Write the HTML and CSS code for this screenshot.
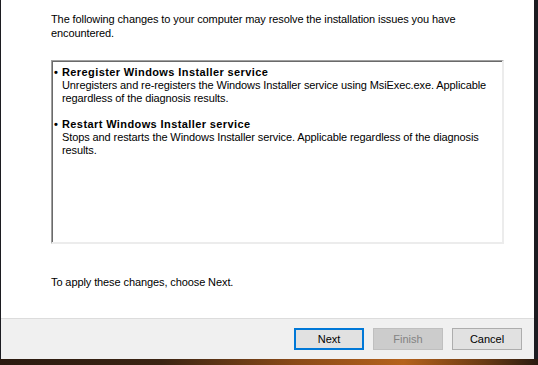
FILE: index.html
```html
<!DOCTYPE html>
<html lang="en">
  <head>
    <meta charset="UTF-8" />
    <meta name="viewport" content="width=device-width, initial-scale=1.0" />
    <title>Troubleshooter</title>
    <link rel="stylesheet" href="styles.css">
  </head>
  <body>
    <div class="screen">
      <div class="window">
        <div class="content">
          <p class="intro">
            The following changes to your computer may resolve the installation issues you have
            encountered.
          </p>
          <div class="fix-list">
            <div class="fix">
              <div class="fix-title"><span class="bullet">&bull;</span>Reregister Windows Installer service</div>
              <div class="fix-desc">Unregisters and re-registers the Windows Installer service using MsiExec.exe. Applicable regardless of the diagnosis results.</div>
            </div>
            <div class="fix">
              <div class="fix-title"><span class="bullet">&bull;</span>Restart Windows Installer service</div>
              <div class="fix-desc">Stops and restarts the Windows Installer service. Applicable regardless of the diagnosis results.</div>
            </div>
          </div>
          <p class="hint">To apply these changes, choose Next.</p>
        </div>
        <div class="footer">
          <button class="btn btn-default">Next</button>
          <button class="btn" disabled>Finish</button>
          <button class="btn">Cancel</button>
        </div>
      </div>
      <div class="wallpaper"></div>
    </div>
  </body>
</html>
```

FILE: styles.css
```css
html, body {
  margin: 0;
  padding: 0;
}
body {
  width: 538px;
  height: 365px;
  overflow: hidden;
  background-color: #1c1c21;
  font-family: "Liberation Sans", Arial, sans-serif;
  font-size: 11px;
  letter-spacing: -0.1px;
  color: #000;
}
.screen {
  display: flex;
  flex-direction: column;
  height: 365px;
}
.window {
  display: flex;
  flex-direction: column;
  width: 533px;
  height: 359px;
  margin-left: 1px;
  background-color: #fff;
}
.content {
  flex: 1;
  padding: 12px 0 0 50px;
}
.intro {
  margin: 0;
  width: 420px;
  line-height: 14px;
}
.fix-list {
  margin-top: 20px;
  width: 448px;
  height: 176px;
  border-style: solid;
  border-width: 1px 2px 2px 1px;
  border-color: #a0a0a0 #ececec #ececec #a0a0a0;
  box-shadow: inset 1px 1px 0 #6a6a6a;
  padding: 5px 0 0 2px;
}
.fix {
  margin-bottom: 13px;
}
.fix-title {
  font-weight: bold;
  letter-spacing: 0.4px;
  line-height: 13px;
}
.bullet {
  display: inline-block;
  width: 8px;
  letter-spacing: 0;
}
.fix-desc {
  padding-left: 8px;
  line-height: 13px;
  width: 436px;
}
.hint {
  margin: 32px 0 0 0;
}
.footer {
  display: flex;
  justify-content: flex-end;
  gap: 9px;
  height: 41px;
  padding: 9px 12px 0 0;
  box-sizing: border-box;
  background-color: #f0f0f0;
  border-top: 1px solid #dcdcdc;
}
.btn {
  width: 70px;
  height: 22px;
  box-sizing: border-box;
  background-color: #e1e1e1;
  border: 1px solid #adadad;
  font-family: inherit;
  font-size: 11px;
  color: #000;
  padding: 0;
}
.btn-default {
  border: 2px solid #0078d7;
}
.btn:disabled {
  background-color: #cccccc;
  border-color: #bfbfbf;
  color: #838383;
}
.wallpaper {
  flex: 1;
  background: linear-gradient(90deg, #2a1a10 0%, #3b2413 30%, #8a4a18 55%, #b5621c 75%, #6a3a14 90%, #2a1a10 100%);
}
```
